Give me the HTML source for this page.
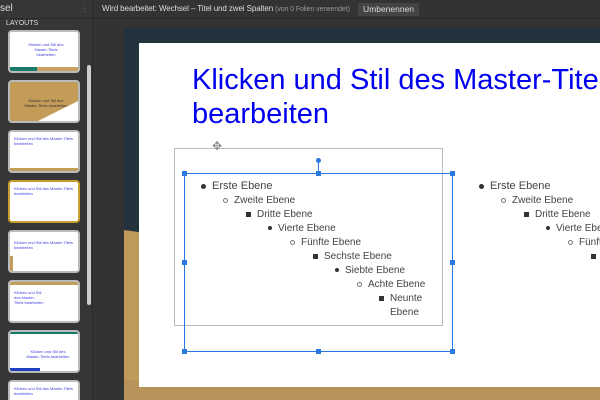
<!DOCTYPE html><html><head><style>
*{margin:0;padding:0;box-sizing:border-box}
html,body{width:600px;height:400px;overflow:hidden}
body{background:#333;font-family:"Liberation Sans",sans-serif;position:relative}
.a{position:absolute}
.th{position:absolute;left:8px;width:72px;height:43px;border:2px solid #bbb;border-radius:4px;background:#fff;overflow:hidden}
.th span{position:absolute;color:#4040e0;font-size:4px;line-height:5px}
.li{position:absolute;font-size:10px;color:#444;white-space:nowrap;font-family:"Liberation Sans",sans-serif}
.li b{display:inline-block;margin-right:6px;vertical-align:middle}
.h{position:absolute;width:5px;height:5px;background:#2a7ae2}
</style></head><body>
<div class="a" style="left:0;top:0;width:93px;height:400px;background:#363636;border-right:1px solid #2a2a2a"></div>
<div class="a" style="left:0;top:0;width:600px;height:19px;border-bottom:1px solid #2a2a2a"></div>
<div class="a" style="left:0;top:3px;color:#ddd;font-size:10px">sel</div>
<div class="a" style="left:80px;top:3px;color:#666;font-size:9px">⋮</div>
<div class="a" style="left:102px;top:4px;color:#ddd;font-size:8px;white-space:nowrap;letter-spacing:-0.1px">Wird bearbeitet: Wechsel – Titel und zwei Spalten <span style="color:#999;font-size:7px">(von 0 Folien verwendet)</span></div>
<div class="a" style="left:358px;top:3px;height:13px;background:#444;color:#ddd;font-size:8.5px;padding:1px 5px;white-space:nowrap">Umbenennen</div>
<div class="a" style="left:6px;top:20px;color:#ddd;font-size:7px">LAYOUTS</div>
<div class="a" style="left:87px;top:65px;width:4px;height:240px;background:#ccc;border-radius:2px"></div>

<div class="th" style="top:30px"><div class="a" style="left:0;bottom:0;width:100%;height:4px;background:linear-gradient(90deg,#1a7a6a 40%,#c8a060 40%)"></div><span style="left:16px;top:10px;width:40px;text-align:center">Klicken und Stil des Master-Titels bearbeiten</span></div>
<div class="th" style="top:80px;background:#c39c58"><span style="left:14px;top:16px;color:#333;width:44px;text-align:center">Klicken und Stil des Master-Titels bearbeiten</span><div class="a" style="right:0;bottom:0;width:0;height:0;border-left:40px solid transparent;border-bottom:20px solid #fff"></div></div>
<div class="th" style="top:130px"><span style="left:4px;top:4px">Klicken und Stil des Master-Titels bearbeiten</span><div class="a" style="left:0;bottom:0;width:100%;height:3px;background:#c39c58"></div></div>
<div class="th" style="top:180px;border-color:#c9a030"><span style="left:4px;top:4px">Klicken und Stil des Master-Titels bearbeiten</span></div>
<div class="th" style="top:230px"><span style="left:4px;top:8px">Klicken und Stil des Master-Titels bearbeiten</span><div class="a" style="left:0;bottom:0;width:3px;height:15px;background:#c39c58"></div></div>
<div class="th" style="top:280px"><span style="left:4px;top:8px;width:30px">Klicken und Stil des Master-Titels bearbeiten</span><div class="a" style="left:0;top:0;width:100%;height:3px;background:#c39c58"></div></div>
<div class="th" style="top:330px"><span style="left:16px;top:17px;width:44px;text-align:center">Klicken und Stil des Master-Titels bearbeiten</span><div class="a" style="left:0;bottom:0;width:30px;height:3px;background:#2040c0"></div><div class="a" style="left:0;top:0;width:100%;height:2px;background:#1a7a6a"></div></div>
<div class="th" style="top:380px;height:20px;border-bottom:none;border-radius:4px 4px 0 0"><span style="left:4px;top:4px">Klicken und Stil des Master-Titels bearbeiten</span></div>

<div class="a" style="left:124px;top:28px;width:476px;height:372px;background:#22333d"></div>
<div class="a" style="left:124px;top:230px;width:476px;height:170px;background:#c09a58;clip-path:polygon(0 0,100% 40%,100% 100%,0 100%)"></div>
<div class="a" style="left:124px;top:380px;width:476px;height:20px;background:#b8945a"></div>
<div class="a" style="left:139px;top:43px;width:461px;height:344px;background:#fff"></div>
<div class="a" style="left:192px;top:63px;width:408px;overflow:hidden;color:#0000ee;font-size:29px;line-height:34px;white-space:nowrap;font-family:'Liberation Sans',sans-serif">Klicken und Stil des Master-Titel<br>bearbeiten</div>
<div class="a" style="left:174px;top:148px;width:269px;height:178px;border:1px solid #bbb"></div>
<div class="a" style="left:184px;top:173px;width:269px;height:179px;border:1px solid #2a7ae2"></div>
<div class="a" style="left:318px;top:160px;width:1px;height:13px;background:#2a7ae2"></div>
<div class="h" style="left:316px;top:158px;border-radius:50%"></div>
<div class="h" style="left:182px;top:171px"></div><div class="h" style="left:316px;top:171px"></div><div class="h" style="left:450px;top:171px"></div>
<div class="h" style="left:182px;top:260px"></div><div class="h" style="left:450px;top:260px"></div>
<div class="h" style="left:182px;top:349px"></div><div class="h" style="left:316px;top:349px"></div><div class="h" style="left:450px;top:349px"></div>
<div class="a" style="left:212px;top:139px;color:#888;font-size:12px">✥</div>

<div class="li" style="left:201px;top:180px;font-size:11px"><b style="width:5px;height:5px;border-radius:50%;background:#333"></b>Erste Ebene</div>
<div class="li" style="left:223px;top:195px"><b style="width:5px;height:5px;border-radius:50%;border:1px solid #777"></b>Zweite Ebene</div>
<div class="li" style="left:246px;top:209px"><b style="width:5px;height:5px;background:#333"></b>Dritte Ebene</div>
<div class="li" style="left:268px;top:223px"><b style="width:4px;height:4px;border-radius:50%;background:#333"></b>Vierte Ebene</div>
<div class="li" style="left:290px;top:237px"><b style="width:5px;height:5px;border-radius:50%;border:1px solid #777"></b>Fünfte Ebene</div>
<div class="li" style="left:313px;top:251px"><b style="width:5px;height:5px;background:#333"></b>Sechste Ebene</div>
<div class="li" style="left:335px;top:265px"><b style="width:4px;height:4px;border-radius:50%;background:#333"></b>Siebte Ebene</div>
<div class="li" style="left:357px;top:279px"><b style="width:5px;height:5px;border-radius:50%;border:1px solid #777"></b>Achte Ebene</div>
<div class="li" style="left:379px;top:293px"><b style="width:5px;height:5px;background:#333"></b>Neunte</div>
<div class="li" style="left:390px;top:307px">Ebene</div>

<div class="a" style="left:470px;top:170px;width:130px;height:100px;overflow:hidden">
<div class="li" style="left:9px;top:10px;font-size:11px"><b style="width:5px;height:5px;border-radius:50%;background:#333"></b>Erste Ebene</div>
<div class="li" style="left:31px;top:25px"><b style="width:5px;height:5px;border-radius:50%;border:1px solid #777"></b>Zweite Ebene</div>
<div class="li" style="left:54px;top:39px"><b style="width:5px;height:5px;background:#333"></b>Dritte Ebene</div>
<div class="li" style="left:76px;top:53px"><b style="width:4px;height:4px;border-radius:50%;background:#333"></b>Vierte Ebene</div>
<div class="li" style="left:98px;top:67px"><b style="width:5px;height:5px;border-radius:50%;border:1px solid #777"></b>Fünfte</div>
<div class="li" style="left:121px;top:81px"><b style="width:5px;height:5px;background:#333"></b></div>
</div>
</body></html>
